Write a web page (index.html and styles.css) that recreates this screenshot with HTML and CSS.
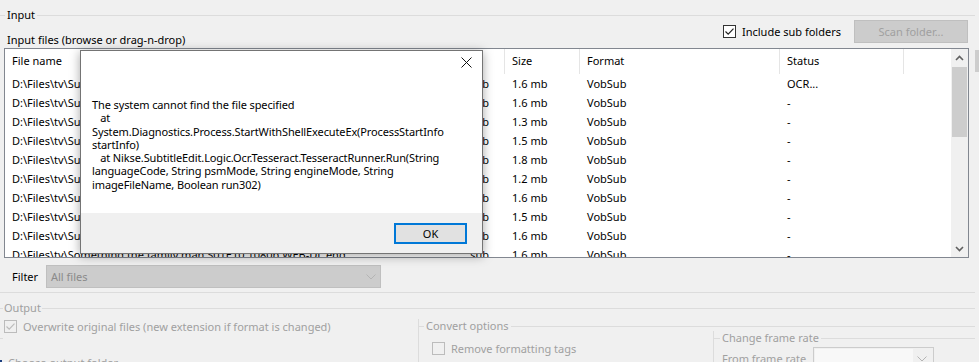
FILE: index.html
```html
<!DOCTYPE html>
<html lang="en">
<head>
    <meta charset="UTF-8">
    <title>Batch convert</title>
    <link rel="stylesheet" href="styles.css">
</head>
<body>
<div class="window">
    <main class="form">
        <!-- Input -->
        <section class="group group-input">
            <div class="legend"><span>Input</span></div>
            <div class="input-bar">
                <span class="caption">Input files (browse or drag-n-drop)</span>
                <label class="check">
                    <span class="box"><svg width="11" height="11" viewBox="0 0 11 11"><path d="M1.5 5.5 L4.2 8.2 L9.5 2.6" fill="none" stroke="#222" stroke-width="1.2"/></svg></span>
                    Include sub folders
                </label>
                <button class="btn" disabled>Scan folder...</button>
            </div>

            <div class="listview">
                <div class="list-body">
                    <div class="row head">
                        <div class="c-name">File name</div>
                        <div class="c-size">Size</div>
                        <div class="c-format">Format</div>
                        <div class="c-status">Status</div>
                        <div class="c-rest"></div>
                    </div>
                    <div class="row"><div class="c-name"><span>D:\Files\tv\Subtitles\Show.S01E01.Pilot</span><span>.sub</span></div><div class="c-size">1.6 mb</div><div class="c-format">VobSub</div><div class="c-status">OCR...</div></div>
                    <div class="row"><div class="c-name"><span>D:\Files\tv\Subtitles\Show.S01E02</span><span>.sub</span></div><div class="c-size">1.6 mb</div><div class="c-format">VobSub</div><div class="c-status">-</div></div>
                    <div class="row"><div class="c-name"><span>D:\Files\tv\Subtitles\Show.S01E03</span><span>.sub</span></div><div class="c-size">1.3 mb</div><div class="c-format">VobSub</div><div class="c-status">-</div></div>
                    <div class="row"><div class="c-name"><span>D:\Files\tv\Subtitles\Show.S01E04</span><span>.sub</span></div><div class="c-size">1.5 mb</div><div class="c-format">VobSub</div><div class="c-status">-</div></div>
                    <div class="row"><div class="c-name"><span>D:\Files\tv\Subtitles\Show.S01E05</span><span>.sub</span></div><div class="c-size">1.8 mb</div><div class="c-format">VobSub</div><div class="c-status">-</div></div>
                    <div class="row"><div class="c-name"><span>D:\Files\tv\Subtitles\Show.S01E06</span><span>.sub</span></div><div class="c-size">1.2 mb</div><div class="c-format">VobSub</div><div class="c-status">-</div></div>
                    <div class="row"><div class="c-name"><span>D:\Files\tv\Subtitles\Show.S01E07</span><span>.sub</span></div><div class="c-size">1.6 mb</div><div class="c-format">VobSub</div><div class="c-status">-</div></div>
                    <div class="row"><div class="c-name"><span>D:\Files\tv\Subtitles\Show.S01E08</span><span>.sub</span></div><div class="c-size">1.5 mb</div><div class="c-format">VobSub</div><div class="c-status">-</div></div>
                    <div class="row"><div class="c-name"><span>D:\Files\tv\Subtitles\Show.S01E09</span><span>.sub</span></div><div class="c-size">1.6 mb</div><div class="c-format">VobSub</div><div class="c-status">-</div></div>
                    <div class="row"><div class="c-name"><span>D:\Files\tv\Something the family man S01E10 1080p WEB-DL eng</span><span>.sub</span></div><div class="c-size">1.6 mb</div><div class="c-format">VobSub</div><div class="c-status">-</div></div>
                </div>
                <div class="vscroll">
                    <div class="arrow"><svg width="9" height="6" viewBox="0 0 9 6"><path d="M1 5 L4.5 1.5 L8 5" fill="none" stroke="#606060" stroke-width="1.6"/></svg></div>
                    <div class="track"><div class="thumb"></div></div>
                    <div class="arrow"><svg width="9" height="6" viewBox="0 0 9 6"><path d="M1 1 L4.5 4.5 L8 1" fill="none" stroke="#606060" stroke-width="1.6"/></svg></div>
                </div>
            </div>

            <div class="filter-row">
                <span class="filter-label">Filter</span>
                <div class="combo disabled">
                    <span>All files</span>
                    <svg width="10" height="6" viewBox="0 0 10 6"><path d="M0.5 0.5 L5 5 L9.5 0.5" fill="none" stroke="#b4b4b4" stroke-width="1"/></svg>
                </div>
            </div>
        </section>

        <!-- Output -->
        <section class="group group-output">
            <div class="legend legend-output"><span>Output</span></div>
            <div class="output-body">
                <div class="output-left">
                    <label class="check disabled">
                        <span class="box"><svg width="11" height="11" viewBox="0 0 11 11"><path d="M1.5 5.5 L4.2 8.2 L9.5 2.6" fill="none" stroke="#bcbcbc" stroke-width="1.2"/></svg></span>
                        Overwrite original files (new extension if format is changed)
                    </label>
                    <div class="folder-tick"></div>
                    <div class="folder-choice"><span class="dot"></span>Choose output folder</div>
                </div>
                <div class="subgroup convert">
                    <div class="legend"><span>Convert options</span></div>
                    <div class="convert-body">
                        <div class="convert-left">
                            <label class="check disabled"><span class="box"></span>Remove formatting tags</label>
                        </div>
                        <div class="subgroup framerate">
                            <div class="legend"><span>Change frame rate</span></div>
                            <div class="frame-row">
                                <span class="frame-label">From frame rate</span>
                                <div class="combo light">
                                    <span class="field"></span>
                                    <svg width="10" height="6" viewBox="0 0 10 6"><path d="M0.5 0.5 L5 5 L9.5 0.5" fill="none" stroke="#b4b4b4" stroke-width="1"/></svg>
                                </div>
                            </div>
                        </div>
                    </div>
                </div>
            </div>
        </section>
    </main>
    <div class="page-scroll"><div class="page-thumb"></div></div>

    <!-- error message box -->
    <div class="dialog">
        <div class="dialog-title">
            <svg class="close" width="11" height="11" viewBox="0 0 11 11"><path d="M0.5 0.5 L10.5 10.5 M10.5 0.5 L0.5 10.5" stroke="#111" stroke-width="1"/></svg>
        </div>
        <div class="dialog-body">The system cannot find the file specified
   at
System.Diagnostics.Process.StartWithShellExecuteEx(ProcessStartInfo
startInfo)
   at Nikse.SubtitleEdit.Logic.Ocr.Tesseract.TesseractRunner.Run(String
languageCode, String psmMode, String engineMode, String
imageFileName, Boolean run302)</div>
        <div class="dialog-foot">
            <button class="btn-ok">OK</button>
        </div>
    </div>
</div>
</body>
</html>
```

FILE: styles.css
```css
/* Batch convert window with error message box */
* {
    box-sizing: border-box;
}

body {
    margin: 0;
    background: #f0f0f0;
    font-family: "Noto Sans", "Open Sans", sans-serif;
    font-size: 11px;
    color: #000;
    overflow: hidden;
}

.window {
    position: relative;
    width: 979px;
    height: 362px;
    display: flex;
    overflow: hidden;
}

.form {
    width: 975px;
    flex: none;
}

.page-scroll {
    width: 4px;
    background: #f0f0f0;
}

.page-thumb {
    margin-top: 50px;
    height: 22px;
    background: #cdcdcd;
}

/* group boxes */
.legend {
    display: flex;
    align-items: center;
    height: 14px;
    line-height: 14px;
}

.legend::before {
    content: "";
    width: 5px;
    border-top: 1px solid #dcdcdc;
}

.legend::after {
    content: "";
    flex: 1;
    border-top: 1px solid #dcdcdc;
}

.legend span {
    padding: 0 2px;
}

.group-input {
    border-bottom: 1px solid #dcdcdc;
    padding-bottom: 4px;
}

.group-input > .legend {
    margin-top: 8px;
}

.input-bar {
    display: flex;
    height: 26px;
    padding: 0 7px;
}

.caption {
    align-self: flex-end;
    line-height: 16px;
}

.check {
    display: flex;
    align-items: center;
    gap: 6px;
}

.input-bar .check {
    margin-left: auto;
    margin-top: -2px;
    height: 23px;
    margin-right: 13px;
}

.box {
    width: 13px;
    height: 13px;
    border: 1px solid #333;
    background: #fff;
    display: flex;
    align-items: center;
    justify-content: center;
}

.check.disabled {
    color: #a0a0a0;
}

.check.disabled .box {
    border-color: #bcbcbc;
    background: #f0f0f0;
}

.btn {
    margin-top: -2px;
    width: 114px;
    height: 23px;
    border: 1px solid #bfbfbf;
    background: #cccccc;
    color: #a0a0a0;
    font: inherit;
}

/* list view */
.listview {
    margin: 0 0 0 4px;
    width: 965px;
    height: 210px;
    border: 1px solid #828790;
    background: #fff;
    display: flex;
}

.list-body {
    flex: 1;
    overflow: hidden;
}

.row {
    display: flex;
    height: 19px;
    line-height: 19px;
    white-space: nowrap;
}

.row.head {
    height: 25px;
    line-height: 25px;
}

.row > div {
    padding-left: 7px;
    overflow: hidden;
    flex: none;
}

.row.head > div {
    border-right: 1px solid #e5e5e5;
    line-height: 24px;
}

.row.head > .c-rest {
    border-right: none;
}

.c-name {
    width: 500px;
    display: flex;
    justify-content: space-between;
    padding-right: 16px;
}

.c-size {
    width: 75px;
}

.c-format {
    width: 200px;
}

.c-status {
    width: 124px;
}

.vscroll {
    width: 17px;
    background: #f0f0f0;
    display: flex;
    flex-direction: column;
}

.arrow {
    height: 17px;
    display: flex;
    align-items: center;
    justify-content: center;
}

.track {
    flex: 1;
}

.thumb {
    margin: 1px 1px 0;
    height: 70px;
    background: #cdcdcd;
}

/* filter */
.filter-row {
    display: flex;
    align-items: center;
    margin-top: 7px;
    height: 23px;
    padding-left: 12px;
}

.filter-label {
    width: 34px;
}

.combo {
    display: flex;
    align-items: center;
    justify-content: space-between;
    height: 23px;
    padding: 0 4px 0 4px;
}

.combo.disabled {
    width: 335px;
    background: #cccccc;
    border: 1px solid #bfbfbf;
    color: #8a8a8a;
}

/* output */
.group-output > .legend {
    margin-top: 8px;
    color: #a0a0a0;
}

.legend-output::before {
    width: 3px;
}

.legend-output span {
    padding: 0 1px;
}

.output-body {
    display: flex;
    margin-top: 4px;
}

.output-left {
    width: 418px;
    flex: none;
}

.output-left .check {
    margin-left: 4px;
    height: 14px;
}

.folder-tick {
    margin-top: 5px;
    width: 3px;
    border-top: 1px solid #dcdcdc;
}

.folder-choice {
    display: flex;
    align-items: center;
    gap: 6px;
    margin-top: 16px;
    height: 14px;
    color: #a0a0a0;
}

.dot {
    width: 2px;
    height: 4px;
    background: #1c3f80;
}

.subgroup {
    border-left: 1px solid #dcdcdc;
    color: #a0a0a0;
}

.convert {
    flex: 1;
    padding-top: 0;
}

.convert .legend::before,
.framerate .legend::before {
    width: 5px;
}

.convert-body {
    display: flex;
}

.convert-left {
    width: 294px;
    padding-left: 13px;
    padding-top: 9px;
}

.convert-left .check {
    height: 13px;
}

.framerate {
    flex: 1;
    margin-top: -2px;
}

.framerate .legend::before {
    width: 6px;
}

.frame-row {
    display: flex;
    align-items: center;
    padding-left: 8px;
    margin-top: 2px;
}

.frame-label {
    width: 91px;
}

.combo.light {
    width: 121px;
    background: #f0f0f0;
    border: 1px solid #cccccc;
    padding: 0 6px 0 1px;
}

.combo.light .field {
    width: 98px;
    height: 19px;
    background: #f8f8f8;
}

/* message box */
.dialog {
    position: absolute;
    left: 80px;
    top: 50px;
    width: 403px;
    height: 204px;
    border: 1px solid #747474;
    background: #fff;
    box-shadow: 0 2px 10px rgba(0, 0, 0, 0.35);
    display: flex;
    flex-direction: column;
}

.dialog-title {
    height: 31px;
    display: flex;
    justify-content: flex-end;
    padding: 6px 10px 0 0;
}

.dialog-body {
    flex: 1;
    padding: 16px 0 0 11px;
    white-space: pre;
    line-height: 13.3px;
    letter-spacing: -0.12px;
}

.dialog-foot {
    height: 40px;
    background: #f0f0f0;
    display: flex;
    justify-content: flex-end;
    padding: 10px 15px 0 0;
}

.btn-ok {
    width: 73px;
    height: 21px;
    border: 2px solid #0078d7;
    background: #e1e1e1;
    font: inherit;
    padding: 0;
}
```
